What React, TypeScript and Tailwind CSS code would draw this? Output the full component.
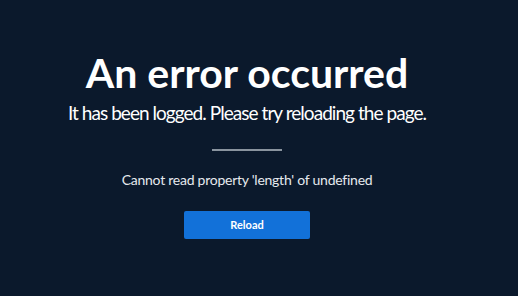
export default function App() {
  return (
    <div className="h-[296px] w-[518px] bg-[#0b192c]">
      <div
        className="flex w-[494px] flex-col items-center text-center"
        style={{ fontFamily: '"Lato", "Noto Sans", sans-serif' }}
      >
        <h1 className="mt-[49px] text-[41px] font-bold leading-[48px] text-white">An error occurred</h1>
        <p className="mt-[3px] text-[19px] leading-[26px] tracking-[-0.95px] text-white">
          It has been logged. Please try reloading the page.
        </p>
        <div className="mt-[23px] h-[2px] w-[70px] bg-[#8a949f]" />
        <p className="mt-[19px] text-[14px] leading-[20px] tracking-[-0.25px] text-[#e6e9ee]">
          Cannot read property 'length' of undefined
        </p>
        <button className="mt-[21px] h-[28px] w-[126px] rounded-[2px] bg-[#1271d9] text-[11px] font-bold text-white">
          Reload
        </button>
      </div>
    </div>
  );
}
